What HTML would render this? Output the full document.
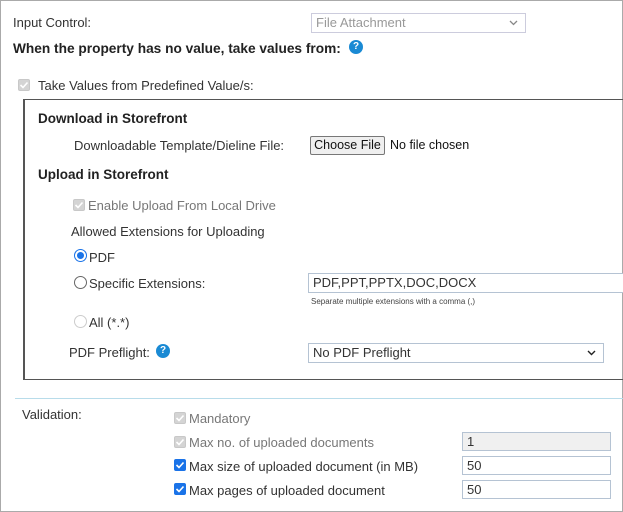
<!DOCTYPE html>
<html><head><meta charset="utf-8"><style>
*{margin:0;padding:0;box-sizing:border-box}
body{width:623px;height:512px;background:#fff;font-family:"Liberation Sans",sans-serif;font-size:13px;color:#333;position:relative;overflow:hidden}
.frame{position:absolute;left:0;top:0;width:623px;height:512px;border:1px solid #aaa}
.a{position:absolute;white-space:nowrap;line-height:15px}
.b{font-weight:bold;color:#222;font-size:13.5px}
.g{color:#777}
.cb{position:absolute;width:12px;height:12px;border-radius:2px;background:#d4d4d4;border:1px solid #c8c8c8}
.cb.on{background:#1a73e8;border-color:#1a73e8}
.cb svg{position:absolute;left:0px;top:0px}
.rd{position:absolute;width:13px;height:13px;border-radius:50%;border:1px solid #666;background:#fff}
.help{position:absolute;width:14px;height:14px;border-radius:50%;background:#1a8ad4;color:#fff;font-size:10px;font-weight:bold;text-align:center;line-height:14px}
.in{position:absolute;border:1px solid #b5c3d3;background:#fff;font-size:13px;line-height:17px;padding-left:4px;color:#333}
.chev{position:absolute;right:7px;top:6px}
</style></head><body>
<div class="frame"></div>
<div class="a" style="left:13px;top:15px">Input Control:</div>
<div class="in" style="left:311px;top:13px;width:215px;height:20px;color:#999;border-color:#ccd;">File Attachment<svg class="chev" width="9" height="6"><path d="M1 1l3.5 3.5L8 1" stroke="#888" stroke-width="1.3" fill="none"/></svg></div>
<div class="a b" style="left:13px;top:41px;font-size:13.7px">When the property has no value, take values from:</div>
<div class="help" style="left:349px;top:40px">?</div>
<div class="cb" style="left:18px;top:79px"><svg width="10" height="10"><path d="M1.5 5l2.5 2.5 4.5-5" stroke="#fff" stroke-width="1.6" fill="none"/></svg></div>
<div class="a" style="left:38px;top:78px">Take Values from Predefined Value/s:</div>
<div style="position:absolute;left:23px;top:99px;width:602px;height:281px;border:1px solid #555;border-left-width:2px;border-right:none"></div>
<div class="a b" style="left:38px;top:111px">Download in Storefront</div>
<div class="a" style="left:74px;top:138px">Downloadable Template/Dieline File:</div>
<div style="position:absolute;left:310px;top:136px;width:75px;height:19px;border:1px solid #777;border-radius:2px;background:#efefef;font-size:12.5px;text-align:center;line-height:17px;color:#111">Choose File</div>
<div class="a" style="left:390px;top:138px;font-size:12.5px;color:#111">No file chosen</div>
<div class="a b" style="left:38px;top:167px">Upload in Storefront</div>
<div class="cb" style="left:73px;top:199px"><svg width="10" height="10"><path d="M1.5 5l2.5 2.5 4.5-5" stroke="#fff" stroke-width="1.6" fill="none"/></svg></div>
<div class="a g" style="left:88px;top:198px">Enable Upload From Local Drive</div>
<div class="a" style="left:71px;top:224px">Allowed Extensions for Uploading</div>
<div class="rd" style="left:74px;top:249px;border:1px solid #1a73e8;"><div style="position:absolute;left:2px;top:2px;width:7px;height:7px;border-radius:50%;background:#1a73e8"></div></div>
<div class="a" style="left:89px;top:250px">PDF</div>
<div class="rd" style="left:74px;top:276px"></div>
<div class="a" style="left:89px;top:276px">Specific Extensions:</div>
<div class="in" style="left:308px;top:273px;width:320px;height:20px">PDF,PPT,PPTX,DOC,DOCX</div>
<div class="a" style="left:311px;top:294px;font-size:8px;color:#444">Separate multiple extensions with a comma (,)</div>
<div class="rd" style="left:74px;top:315px;border-color:#ccc"></div>
<div class="a" style="left:89px;top:315px">All (*.*)</div>
<div class="a" style="left:69px;top:345px">PDF Preflight:</div>
<div class="help" style="left:156px;top:344px">?</div>
<div class="in" style="left:308px;top:343px;width:296px;height:20px">No PDF Preflight<svg class="chev" width="9" height="6"><path d="M1 1l3.5 3.5L8 1" stroke="#222" stroke-width="1.4" fill="none"/></svg></div>
<div style="position:absolute;left:15px;top:398px;width:608px;height:1px;background:#b8dcea"></div>
<div class="a" style="left:22px;top:407px">Validation:</div>
<div class="cb" style="left:174px;top:412px"><svg width="10" height="10"><path d="M1.5 5l2.5 2.5 4.5-5" stroke="#fff" stroke-width="1.6" fill="none"/></svg></div>
<div class="a g" style="left:189px;top:411px">Mandatory</div>
<div class="cb" style="left:174px;top:436px"><svg width="10" height="10"><path d="M1.5 5l2.5 2.5 4.5-5" stroke="#fff" stroke-width="1.6" fill="none"/></svg></div>
<div class="a g" style="left:189px;top:435px">Max no. of uploaded documents</div>
<div class="in" style="left:462px;top:432px;width:149px;height:19px;background:#f0f0f0">1</div>
<div class="cb on" style="left:174px;top:459px"><svg width="10" height="10"><path d="M1.5 5l2.5 2.5 4.5-5" stroke="#fff" stroke-width="1.6" fill="none"/></svg></div>
<div class="a" style="left:189px;top:459px">Max size of uploaded document (in MB)</div>
<div class="in" style="left:462px;top:456px;width:149px;height:19px">50</div>
<div class="cb on" style="left:174px;top:483px"><svg width="10" height="10"><path d="M1.5 5l2.5 2.5 4.5-5" stroke="#fff" stroke-width="1.6" fill="none"/></svg></div>
<div class="a" style="left:189px;top:483px">Max pages of uploaded document</div>
<div class="in" style="left:462px;top:480px;width:149px;height:19px">50</div>
</body></html>
